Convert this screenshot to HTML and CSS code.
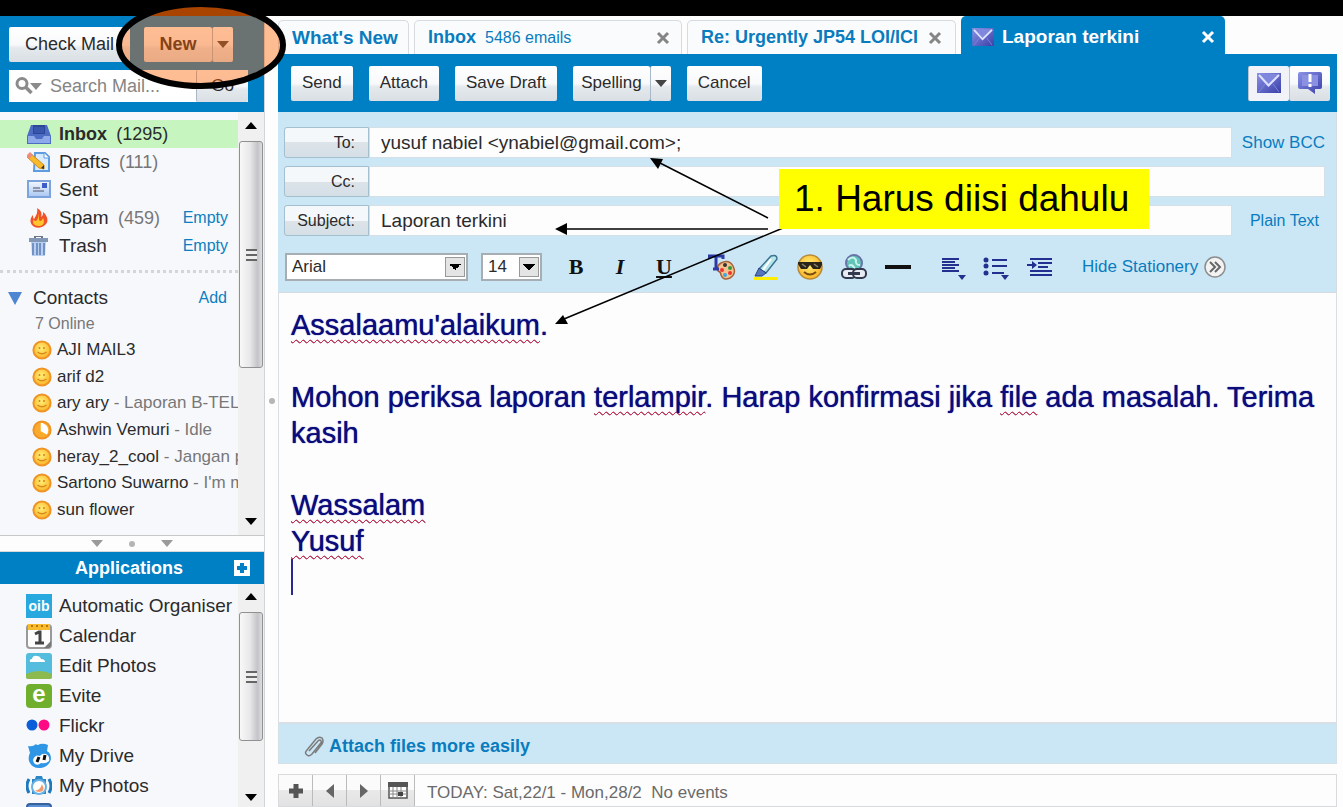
FILE: index.html
```
<!DOCTYPE html>
<html lang="id">
<head>
    <meta charset="UTF-8">
    <meta name="viewport" content="width=device-width, initial-scale=1.0">
    <title>Laporan terkini</title>
    <link rel="stylesheet" href="styles.css">
</head>
<body>
    <!-- shared symbols -->
    <svg class="defs" width="0" height="0" aria-hidden="true">
        <defs>
            <linearGradient id="violet" x1="0" y1="0" x2="1" y2="1">
                <stop offset="0" stop-color="#8b93e6"/>
                <stop offset="1" stop-color="#3a3fa8"/>
            </linearGradient>
            <linearGradient id="steel" x1="0" y1="0" x2="0" y2="1">
                <stop offset="0" stop-color="#f4f8ff"/>
                <stop offset="1" stop-color="#a9c6f2"/>
            </linearGradient>
            <radialGradient id="gold" cx=".45" cy=".4" r=".6">
                <stop offset="0" stop-color="#fff07a"/>
                <stop offset="1" stop-color="#fbb324"/>
            </radialGradient>
            <symbol id="smiley" viewBox="0 0 20 20">
                <circle cx="10" cy="10" r="8.6" fill="url(#gold)" stroke="#ef9424" stroke-width="2"/>
                <path d="M7.5 7v2M12 7v2" stroke="#d98a1c" stroke-width="1.6"/>
                <path d="M5.5 12q4.5 3.5 9 0" fill="none" stroke="#d98a1c" stroke-width="1.4"/>
            </symbol>
            <symbol id="idle" viewBox="0 0 20 20">
                <circle cx="10" cy="10" r="8.6" fill="#fbab2c" stroke="#ef9424" stroke-width="2"/>
                <path d="M10 3.5v7l5.5 2.500a6.500 6.500 0 0 0-5.500-9.500z" fill="#fff"/>
                <path d="M10 3v7.500l5.500 3" fill="none" stroke="#fff" stroke-width="2.500"/>
            </symbol>
            <symbol id="mail" viewBox="0 0 24 20">
                <rect width="24" height="20" fill="url(#violet)"/>
                <path d="M1 1h22L12 13z" fill="#7f88dd"/>
                <path d="M2 2l9.500 10.500L22 2" fill="none" stroke="#dfe3ff" stroke-width="2"/>
                <path d="M2 19l6-8M22 19l-6-8" fill="none" stroke="#7d84d8" stroke-width="1"/>
            </symbol>
            <symbol id="cross" viewBox="0 0 14 14">
                <path d="M2 2l10 10M12 2L2 12" fill="none" stroke="currentColor" stroke-width="3"/>
            </symbol>
            <symbol id="down" viewBox="0 0 12 7">
                <path d="M0 0h12L6 7z" fill="currentColor"/>
            </symbol>
        </defs>
    </svg>

    <div class="top-strip"></div>

    <div class="shell">
        <aside class="sidebar">
            <div class="side-head">
                <div class="head-row">
                    <button class="btn check">Check Mail</button>
                    <div class="split">
                        <button class="btn new">New</button>
                        <button class="btn arrow" aria-label="New options"><svg width="12" height="7"><use href="#down"/></svg></button>
                    </div>
                </div>
                <form class="search">
                    <label for="search" aria-label="Search">
                        <svg width="28" height="20" viewBox="0 0 28 20">
                            <circle cx="8" cy="7.500" r="5" fill="none" stroke="#8b8b8b" stroke-width="3"/>
                            <path d="M11.500 11l6 6" stroke="#8b8b8b" stroke-width="3.500"/>
                            <path d="M16 7h12l-6 7z" fill="#8b8b8b"/>
                        </svg>
                    </label>
                    <input id="search" type="text" placeholder="Search Mail...">
                    <button class="btn go" type="button">Go</button>
                </form>
            </div>

            <div class="side-panel folders-panel">
                <div class="side-content">
                    <ul class="folders">
                        <li class="current">
                            <svg width="24" height="20" viewBox="0 0 24 20">
                                <path d="M4 1h16l4 11v8H0v-8z" fill="#4d6cc4"/>
                                <path d="M6 1h12v9H6z" fill="#2c4796"/>
                                <path d="M1 12h6l2 3h6l2-3h6v7H1z" fill="#8ea9ea"/>
                                <path d="M7 3h10v6H7z" fill="#3856ab"/>
                            </svg>
                            <a href="#"><b>Inbox</b> <span>(1295)</span></a>
                        </li>
                        <li>
                            <svg width="24" height="20" viewBox="0 0 24 20">
                                <path d="M8 1h10l4 4v14H7z" fill="#d9ebff" stroke="#5f9be0" stroke-width="2"/>
                                <path d="M17 1v5h5" fill="#fff" stroke="#5f9be0"/>
                                <path d="M3 1l14 12v4l-5-1L0 5z" fill="#f8b92d" stroke="#d08b18"/>
                                <path d="M3 0l3 3-4 4-3-3z" fill="#ee8d7d"/>
                                <path d="M14 16l3 1v-4z" fill="#333"/>
                            </svg>
                            <a href="#">Drafts <span>(111)</span></a>
                        </li>
                        <li>
                            <svg width="24" height="20" viewBox="0 0 24 20">
                                <rect x="1" y="1" width="22" height="16" fill="url(#steel)" stroke="#7da3dd" stroke-width="2"/>
                                <rect x="15" y="3" width="5" height="5" fill="#3c5ec8"/>
                                <path d="M6 8h7M6 11h11" stroke="#7a7f96" stroke-width="1.500"/>
                            </svg>
                            <a href="#">Sent</a>
                        </li>
                        <li>
                            <svg width="24" height="20" viewBox="0 0 24 20">
                                <path d="M10 0c5 3 5 6 4 9 2-1 2-3 2-5 5 4 6 10 2 13-4 4-11 3-13 0-3-4-1-8 1-10 0 2 0 3 1 4C9 8 11 5 10 0z" fill="#f0532a"/>
                                <path d="M11 6c2 3 0 6 2 7 2 0 2-2 3-3 2 4 1 8-4 8-6 0-7-4-5-7 0 2 1 2 2 2 2-2 3-4 2-7z" fill="#ffc52e"/>
                            </svg>
                            <a href="#">Spam <span>(459)</span></a>
                            <a class="action" href="#">Empty</a>
                        </li>
                        <li>
                            <svg width="24" height="20" viewBox="0 0 24 20">
                                <path d="M8 2V0h7v2" fill="none" stroke="#6b7687" stroke-width="2"/>
                                <path d="M2 2h19v4H2z" fill="#8296b6"/>
                                <path d="M4 6h15l-1 14H5z" fill="#b9cff0"/>
                                <path d="M6 7v12M10 7v12M13 7v12M17 7v12" stroke="#5b7fb6" stroke-width="1.500"/>
                            </svg>
                            <a href="#">Trash</a>
                            <a class="action" href="#">Empty</a>
                        </li>
                    </ul>

                    <div class="contacts-head">
                        <svg width="14" height="13" viewBox="0 0 14 13"><path d="M0 0h14L7 13z" fill="#4f86d2"/></svg>
                        <h2>Contacts</h2>
                        <a class="action" href="#">Add</a>
                    </div>
                    <p class="online">7 Online</p>
                    <ul class="buddies">
                        <li><svg width="20" height="20"><use href="#smiley"/></svg>AJI MAIL3</li>
                        <li><svg width="20" height="20"><use href="#smiley"/></svg>arif d2</li>
                        <li><svg width="20" height="20"><use href="#smiley"/></svg>ary ary <span>- Laporan B-TEL</span></li>
                        <li><svg width="20" height="20"><use href="#idle"/></svg>Ashwin Vemuri <span>- Idle</span></li>
                        <li><svg width="20" height="20"><use href="#smiley"/></svg>heray_2_cool <span>- Jangan p</span></li>
                        <li><svg width="20" height="20"><use href="#smiley"/></svg>Sartono Suwarno <span>- I'm m</span></li>
                        <li><svg width="20" height="20"><use href="#smiley"/></svg>sun flower</li>
                    </ul>
                </div>
                <div class="scrollbar">
                    <svg class="up" width="12" height="7"><use href="#down"/></svg>
                    <div class="track"><div class="thumb tall"></div></div>
                    <svg width="12" height="7"><use href="#down"/></svg>
                </div>
            </div>

            <div class="splitter">
                <svg width="12" height="7"><use href="#down"/></svg>
                <i></i>
                <svg width="12" height="7"><use href="#down"/></svg>
            </div>

            <div class="apps-head">
                <h2>Applications</h2>
                <button aria-label="Add application">
                    <svg width="16" height="16" viewBox="0 0 16 16">
                        <rect width="16" height="16" fill="#fff"/>
                        <path d="M8 3v10M3 8h10" stroke="#0080c4" stroke-width="4"/>
                    </svg>
                </button>
            </div>

            <div class="side-panel apps-panel">
                <ul class="apps side-content">
                    <li><b class="oib">oib</b><a href="#">Automatic Organiser</a></li>
                    <li>
                        <svg width="26" height="26" viewBox="0 0 26 26">
                            <rect x="1" y="2" width="24" height="23" rx="3" fill="#fdfdfd" stroke="#9a9a9a" stroke-width="2"/>
                            <path d="M2 1h22v6H2z" fill="#f9bb2f"/>
                            <path d="M5 3h2M10 3h2M15 3h2M20 3h2" stroke="#b9770a" stroke-width="2"/>
                            <path d="M9 11l4-2h1v11M9 20h9" fill="none" stroke="#444" stroke-width="3"/>
                            <path d="M25 18l-7 7h5l2-2z" fill="#777"/>
                        </svg>
                        <a href="#">Calendar</a>
                    </li>
                    <li>
                        <svg width="26" height="26" viewBox="0 0 26 26">
                            <rect width="26" height="26" rx="3" fill="#54bcdc"/>
                            <path d="M0 21q13-6 26 0v3q0 2-2 2H2q-2 0-2-2z" fill="#8cba4e"/>
                            <path d="M4 9q-1-3 2-3 1-4 5-3 3 0 4 3 4 0 4 3z" fill="#fff"/>
                        </svg>
                        <a href="#">Edit Photos</a>
                    </li>
                    <li><b class="evite">e</b><a href="#">Evite</a></li>
                    <li>
                        <svg width="26" height="26" viewBox="0 0 26 26">
                            <circle cx="6" cy="12" r="5.500" fill="#0a5fd8"/>
                            <circle cx="18" cy="12" r="5.500" fill="#ff0a84"/>
                        </svg>
                        <a href="#">Flickr</a>
                    </li>
                    <li>
                        <svg width="26" height="26" viewBox="0 0 26 26">
                            <path d="M2 3q5 1 8-2 1 2 4 0 4-1 8 1l-1 6q4 2 4 8-2 8-10 9-9 1-12-7-1-5 1-8z" fill="#2f96e6"/>
                            <path d="M7 17q2-6 7-4 2-3 6-2 4 2 3 7-3 3-8 2-3 3-6 1-2-2-2-4z" fill="#fff"/>
                            <path d="M13 14l-2 5M19 12l-1 5" stroke="#111" stroke-width="3"/>
                        </svg>
                        <a href="#">My Drive</a>
                    </li>
                    <li>
                        <svg width="26" height="26" viewBox="0 0 26 26">
                            <path d="M3 6q-4 7 0 14M23 6q4 7 0 14" fill="none" stroke="#1d79bd" stroke-width="3"/>
                            <path d="M6 6h3l1-3h6l1 3h3v15H6z" fill="#2b86c8"/>
                            <circle cx="13" cy="14" r="7" fill="#fff" stroke="#69b1e2" stroke-width="2"/>
                            <path d="M9 17q5 1 7-6 4 8-3 8-3 0-4-2z" fill="#f39a6d"/>
                        </svg>
                        <a href="#">My Photos</a>
                    </li>
                    <li>
                        <svg width="26" height="26" viewBox="0 0 26 26"><rect x="1" y="1" width="24" height="24" rx="3" fill="#5a8fd2" stroke="#35619f" stroke-width="2"/></svg>
                    </li>
                </ul>
                <div class="scrollbar">
                    <svg class="up" width="12" height="7"><use href="#down"/></svg>
                    <div class="track"><div class="thumb short"></div></div>
                    <svg width="12" height="7"><use href="#down"/></svg>
                </div>
            </div>
        </aside>

        <div class="gutter"><i></i></div>

        <main class="main">
            <nav class="tabs">
                <a class="tab whats" href="#">What's New</a>
                <div class="tab inbox">
                    <a href="#">Inbox <span>5486 emails</span></a>
                    <button aria-label="Close Inbox"><svg width="14" height="14"><use href="#cross"/></svg></button>
                </div>
                <div class="tab re">
                    <a href="#">Re: Urgently JP54 LOI/ICI</a>
                    <button aria-label="Close message"><svg width="14" height="14"><use href="#cross"/></svg></button>
                </div>
                <div class="tab active">
                    <svg width="24" height="18"><use href="#mail"/></svg>
                    <a href="#">Laporan terkini</a>
                    <button aria-label="Close Laporan terkini"><svg width="14" height="14"><use href="#cross"/></svg></button>
                </div>
            </nav>

            <div class="toolbar">
                <button class="btn">Send</button>
                <button class="btn">Attach</button>
                <button class="btn">Save Draft</button>
                <div class="split">
                    <button class="btn">Spelling</button>
                    <button class="btn arrow" aria-label="Spelling options"><svg width="12" height="7"><use href="#down"/></svg></button>
                </div>
                <button class="btn">Cancel</button>
                <div class="split modes">
                    <button class="btn icon on" aria-label="Mail"><svg width="24" height="20"><use href="#mail"/></svg></button>
                    <button class="btn icon" aria-label="Instant message">
                        <svg width="26" height="24" viewBox="0 0 26 24">
                            <path d="M3 1h20q2 0 2 2v13q0 2-2 2h-5v5l-7-5H3q-2 0-2-2V3q0-2 2-2z" fill="url(#violet)"/>
                            <path d="M5 4h16v11H5z" fill="#8a91e2"/>
                            <path d="M13 3v8M13 13v3" stroke="#fff" stroke-width="3"/>
                        </svg>
                    </button>
                </div>
            </div>

            <div class="compose-head">
                <div class="field">
                    <label for="to">To:</label>
                    <input id="to" type="text" value="yusuf nabiel &lt;ynabiel@gmail.com&gt;;">
                    <a href="#">Show BCC</a>
                </div>
                <div class="field">
                    <label for="cc">Cc:</label>
                    <input id="cc" type="text">
                </div>
                <div class="field">
                    <label for="subject">Subject:</label>
                    <input id="subject" type="text" value="Laporan terkini">
                    <a href="#" class="small">Plain Text</a>
                </div>

                <div class="format-bar">
                    <select class="font" aria-label="Font"><option>Arial</option></select>
                    <select class="size" aria-label="Font size"><option>14</option></select>
                    <div class="tools">
                        <button class="bold">B</button>
                        <button class="italic">I</button>
                        <button class="under">U</button>
                    </div>
                    <div class="tools pictures">
                        <button aria-label="Text colour">
                            <svg width="28" height="28" viewBox="0 0 28 28">
                                <path d="M13 10q8-4 12 3 4 8-3 12-7 3-9-3 0-3-3-4-2-5 3-8z" fill="#f5c18c" stroke="#a4613a" stroke-width="1.500"/>
                                <circle cx="17" cy="12" r="2" fill="#333"/><circle cx="22" cy="15" r="2" fill="#2d9a3d"/>
                                <circle cx="22" cy="20" r="2" fill="#e33"/><circle cx="17" cy="22" r="2" fill="#38a9e0"/><circle cx="14" cy="17" r="2" fill="#e33"/>
                                <path d="M1 6V3h14v3M8 3v13M5 16h6" fill="none" stroke="#2c3aa6" stroke-width="3"/>
                            </svg>
                        </button>
                        <button aria-label="Highlight">
                            <svg width="28" height="28" viewBox="0 0 28 28">
                                <path d="M2 24h24v3H2z" fill="#ffee00"/>
                                <path d="M19 3q6-2 6 3L14 20 7 16z" fill="#b4e6ea" stroke="#3c7392" stroke-width="1.500"/>
                                <path d="M7 15l7 5-4 3H3z" fill="#5575bd" stroke="#2d4377"/>
                                <path d="M19 6L11 17" stroke="#fff" stroke-width="2"/>
                            </svg>
                        </button>
                        <button aria-label="Emoticon">
                            <svg width="28" height="28" viewBox="0 0 28 28">
                                <circle cx="14" cy="14" r="12" fill="url(#gold)" stroke="#b98a38" stroke-width="1.500"/>
                                <path d="M2 9h24v3l-2 4h-7l-3-4-3 4H5l-3-5z" fill="#2b2418"/>
                                <path d="M6 11l4 3M18 11l4 3" stroke="#8a8474" stroke-width="1.500"/>
                                <path d="M8 19q6 5 12 0" fill="none" stroke="#7b4a12" stroke-width="2"/>
                            </svg>
                        </button>
                        <button aria-label="Insert link">
                            <svg width="28" height="28" viewBox="0 0 28 28">
                                <circle cx="14" cy="10" r="8" fill="#62c5b8" stroke="#6973a8" stroke-width="2"/>
                                <path d="M8 7q5-5 8 0-1 5 4 5M9 13q3-3 6 3" fill="none" stroke="#c9f3ec" stroke-width="2"/>
                                <rect x="2" y="16" width="14" height="9" rx="4" fill="#e8ebf3" stroke="#33384d" stroke-width="2"/>
                                <rect x="13" y="16" width="13" height="9" rx="4" fill="#e8ebf3" stroke="#33384d" stroke-width="2"/>
                                <path d="M8 20.500h12" stroke="#33384d" stroke-width="3"/>
                            </svg>
                        </button>
                        <button aria-label="Horizontal line">
                            <svg width="28" height="28" viewBox="0 0 28 28"><path d="M1 14h26" stroke="#111" stroke-width="4"/></svg>
                        </button>
                    </div>
                    <div class="tools para">
                        <button aria-label="Align">
                            <svg width="28" height="28" viewBox="0 0 28 28">
                                <path d="M2 6h17M2 9h13M2 12h17M2 15h13M2 18h17" stroke="#23308f" stroke-width="2"/>
                                <path d="M18 22h8l-4 5z" fill="#23308f"/>
                            </svg>
                        </button>
                        <button aria-label="List">
                            <svg width="28" height="28" viewBox="0 0 28 28">
                                <path d="M9 7h15M9 13h15M9 20h12" stroke="#23308f" stroke-width="2"/>
                                <circle cx="3" cy="7" r="2.500" fill="#23308f"/><circle cx="3" cy="13" r="2.500" fill="#23308f"/><circle cx="3" cy="20" r="2.500" fill="#23308f"/>
                                <path d="M18 22h8l-4 5z" fill="#23308f"/>
                            </svg>
                        </button>
                        <button aria-label="Indent">
                            <svg width="28" height="28" viewBox="0 0 28 28">
                                <path d="M4 6h22M12 10h14M12 14h10M4 18h22M4 22h22" stroke="#23308f" stroke-width="2"/>
                                <path d="M1 12h6" stroke="#23308f" stroke-width="2"/>
                                <path d="M6 8l5 4-5 4z" fill="#23308f"/>
                            </svg>
                        </button>
                    </div>
                    <a class="stationery" href="#">Hide Stationery
                        <svg width="22" height="22" viewBox="0 0 22 22">
                            <circle cx="11" cy="11" r="10" fill="#f3f3f3" stroke="#8d8d8d" stroke-width="1.500"/>
                            <path d="M6 6l5 5-5 5M11 6l5 5-5 5" fill="none" stroke="#666" stroke-width="2"/>
                        </svg>
                    </a>
                </div>
            </div>

            <div class="editor" contenteditable="true" spellcheck="false">
                <p><u>Assalaamu'alaikum</u>.</p>
                <p><br></p>
                <p>Mohon periksa laporan <u>terlampir</u>. Harap konfirmasi jika <u>file</u> ada masalah. Terima kasih</p>
                <p><br></p>
                <p><u>Wassalam</u></p>
                <p><u>Yusuf</u></p>
                <p class="caret"><br></p>
            </div>

            <div class="attach-bar">
                <svg width="20" height="22" viewBox="0 0 20 22">
                    <path d="M5 15L14 5q2-2 3 0 1 1-1 3L8 18q-3 3-5 1-3-2 0-5L12 3q3-3 6-1 2 3 0 6l-7 9" fill="none" stroke="#7b7b7b" stroke-width="1.500"/>
                </svg>
                <a href="#">Attach files more easily</a>
            </div>

            <footer class="agenda">
                <button aria-label="Add event"><svg width="14" height="14" viewBox="0 0 14 14"><path d="M7 0v14M0 7h14" stroke="#555" stroke-width="5"/></svg></button>
                <button aria-label="Previous"><svg width="8" height="14" viewBox="0 0 8 14"><path d="M8 0v14L0 7z" fill="#666"/></svg></button>
                <button aria-label="Next"><svg width="8" height="14" viewBox="0 0 8 14"><path d="M0 0v14l8-7z" fill="#666"/></svg></button>
                <button aria-label="Calendar">
                    <svg width="20" height="17" viewBox="0 0 20 17">
                        <rect x="1" y="1" width="18" height="15" fill="#fff" stroke="#555" stroke-width="1.500"/>
                        <path d="M0 0h20v5H0z" fill="#555"/>
                        <path d="M1 9h18M1 12h18M5 5v11M9 5v11M13 5v11" stroke="#888"/>
                        <path d="M10 10h5v4h-5z" fill="#444"/>
                    </svg>
                </button>
                <p>TODAY: Sat,22/1 - Mon,28/2&nbsp; No events</p>
            </footer>
        </main>
    </div>

    <!-- tutorial notes drawn over the mail window -->
    <svg class="ring" width="172" height="88" viewBox="0 0 172 88">
        <clipPath id="above"><rect width="172" height="15"/></clipPath>
        <ellipse cx="86" cy="44" rx="82" ry="41" fill="#ff6200" fill-opacity=".42"/>
        <ellipse cx="86" cy="44" rx="82" ry="41" fill="#ff6a00" fill-opacity=".42" clip-path="url(#above)"/>
        <ellipse cx="86" cy="44" rx="82" ry="41" fill="none" stroke="#000" stroke-width="6"/>
    </svg>
    <svg class="arrows" width="240" height="180" viewBox="0 0 240 180">
        <path d="M218 67L110 12M218 78H14M233 77L14 168" fill="none" stroke="#000" stroke-width="1.500"/>
        <path d="M100 7l13 1-5 10zM5 78l12-6v12zM5 173l8-9 5 9z"/>
    </svg>
    <div class="note">1. Harus diisi dahulu</div>
</body>
</html>
```
FILE: styles.css
```
* {
    margin: 0;
    padding: 0;
    box-sizing: border-box;
}

body {
    position: relative;
    height: 100vh;
    display: flex;
    flex-direction: column;
    overflow: hidden;
    background: #fdfdfe;
    color: #2b2b2b;
    font-family: "Liberation Sans", Arial, sans-serif;
    font-size: 17px;
}

button,
input,
select {
    font: inherit;
    color: inherit;
    border: none;
    border-radius: 0;
    background: none;
}

button {
    cursor: pointer;
}

a {
    color: inherit;
    text-decoration: none;
}

ul {
    list-style: none;
}

.defs {
    position: absolute;
}

.top-strip {
    flex: none;
    height: 16px;
    background: #000;
}

.shell {
    flex: 1;
    min-height: 0;
    display: flex;
}

/* buttons */
.btn {
    display: flex;
    align-items: center;
    justify-content: center;
    height: 35px;
    padding: 0 11px;
    border-radius: 2px;
    background: linear-gradient(#fff, #f8f9fb 50%, #e4e9ed 60%, #d9dfe4);
    white-space: nowrap;
}

.split {
    display: flex;
}

.split .btn {
    padding: 0 8px;
}

.split .arrow {
    padding: 0 4px;
    border-left: 1px solid #a9b8c4;
    color: #444;
}

/* sidebar */
.sidebar {
    flex: none;
    width: 265px;
    display: flex;
    flex-direction: column;
    border-right: 1px solid #cfd4d8;
    background: #f7f8fc;
}

.side-head {
    flex: none;
    height: 96px;
    padding: 11px 16px 0 9px;
    background: #0080c4;
}

.head-row {
    display: flex;
    gap: 14px;
    margin-bottom: 8px;
}

.check {
    width: 121px;
    font-size: 18px;
}

.new {
    width: 68px;
    font-size: 18px;
    font-weight: bold;
}

.search {
    display: flex;
    align-items: center;
    height: 32px;
    background: #fff;
}

.search label {
    display: flex;
    padding-left: 5px;
}

.search input {
    flex: 1;
    min-width: 0;
    padding-left: 8px;
    font-size: 18px;
}

.search input::placeholder {
    color: #858585;
    opacity: 1;
}

.go {
    width: 52px;
    height: 32px;
    border-left: 1px solid #a9b8c4;
}

.side-panel {
    display: flex;
    overflow: hidden;
}

.side-content {
    flex: 1;
    min-width: 0;
}

.folders-panel {
    flex: none;
    height: 424px;
    border-bottom: 1px solid #c8c8c8;
}

.folders {
    padding: 8px 0 10px;
    border-bottom: 3px dotted #d4d5d8;
    font-size: 19px;
}

.folders li {
    display: flex;
    align-items: center;
    gap: 8px;
    height: 28px;
    padding: 0 10px 0 27px;
}

.folders .current {
    background: #c6f5c0;
}

.folders b {
    font-size: 18px;
}

.folders span {
    margin-left: 4px;
    font-size: 18px;
    color: #777;
}

.folders .current span {
    color: #2b2b2b;
}

.action {
    margin-left: auto;
    font-size: 16px;
    color: #0a80c0;
}

.contacts-head {
    display: flex;
    align-items: center;
    height: 26px;
    margin-top: 12px;
    padding: 0 11px 0 8px;
}

.contacts-head h2 {
    margin-left: 11px;
    font-size: 19px;
    font-weight: normal;
}

.online {
    padding-left: 35px;
    font-size: 16px;
    line-height: 26px;
    color: #777;
}

.buddies {
    display: grid;
    grid-auto-rows: 1fr;
    height: 186px;
}

.buddies li {
    display: flex;
    align-items: center;
    overflow: hidden;
    padding-left: 32px;
    white-space: pre;
}

.buddies svg {
    flex: none;
    margin-right: 5px;
}

.buddies span {
    color: #777;
}

.scrollbar {
    flex: none;
    width: 26px;
    display: flex;
    flex-direction: column;
    align-items: center;
    padding: 10px 1px;
    background: #f0f0f1;
    color: #000;
}

.scrollbar .up {
    transform: scaleY(-1);
}

.track {
    flex: 1;
    width: 100%;
    padding-top: 12px;
}

.thumb {
    display: flex;
    align-items: center;
    justify-content: center;
    border: 1px solid #909090;
    border-radius: 3px;
    background: linear-gradient(90deg, #f8f8f8, #e8e8ea 45%, #c4c4c9 80%, #dedee0);
}

.thumb::after {
    content: "";
    width: 11px;
    height: 12px;
    background: repeating-linear-gradient(#666 0 2px, #eee 2px 5px);
}

.tall {
    height: 227px;
}

.short {
    height: 129px;
}

.splitter {
    flex: none;
    display: flex;
    align-items: center;
    justify-content: center;
    gap: 26px;
    height: 16px;
    border-bottom: 1px solid #d8d8d8;
    background: #fdfdfd;
    color: #9a9a9a;
}

.splitter i,
.gutter i {
    width: 6px;
    height: 6px;
    border-radius: 50%;
    background: #b5b5b5;
}

.apps-head {
    flex: none;
    display: flex;
    align-items: center;
    height: 32px;
    padding: 0 14px 0 24px;
    background: #0080c4;
    color: #fff;
}

.apps-head h2 {
    flex: 1;
    text-align: center;
    font-size: 18px;
}

.apps-head button {
    display: flex;
}

.apps-panel {
    flex: 1;
    min-height: 0;
}

.apps {
    padding-top: 7px;
    font-size: 19px;
}

.apps-panel .scrollbar {
    padding: 9px 1px 6px;
}

.apps li {
    display: flex;
    align-items: center;
    gap: 7px;
    height: 30px;
    padding-left: 26px;
    white-space: nowrap;
}

.oib,
.evite {
    flex: none;
    width: 26px;
    height: 24px;
    color: #fff;
    font-size: 14px;
    line-height: 24px;
    text-align: center;
    background: #27a9df;
}

.evite {
    border-radius: 4px;
    font-size: 24px;
    line-height: 20px;
    background: #6faf2d;
}

.gutter {
    flex: none;
    display: flex;
    align-items: center;
    justify-content: center;
    width: 13px;
    padding-bottom: 22px;
}

/* main column */
.main {
    flex: 1;
    min-width: 0;
    display: flex;
    flex-direction: column;
    margin-right: 6px;
}

.tabs {
    flex: none;
    display: flex;
    align-items: flex-end;
    gap: 5px;
    height: 38px;
    font-size: 19px;
    font-weight: bold;
    color: #0a7cbe;
}

.tab {
    display: flex;
    align-items: center;
    height: 34px;
    padding: 0 13px;
    border: 1px solid #d5dbe0;
    border-bottom: none;
    border-radius: 5px 5px 0 0;
    background: #fafbfd;
    white-space: nowrap;
}

.tab button {
    display: flex;
    margin-left: auto;
    color: #858585;
}

.tab span {
    margin-left: 4px;
    font-size: 16px;
    font-weight: normal;
}

.whats {
    width: 131px;
}

.inbox {
    width: 268px;
    padding-right: 11px;
    font-size: 18px;
}

.re {
    width: 269px;
    font-size: 18px;
}

.active {
    width: 264px;
    height: 38px;
    padding: 4px 10px 0;
    gap: 7px;
    border: none;
    background: #0080c4;
    color: #fff;
}

.active button {
    color: #fff;
}

.toolbar {
    flex: none;
    display: flex;
    align-items: center;
    gap: 16px;
    height: 58px;
    padding: 0 7px 0 13px;
    background: #0080c4;
}

.modes {
    margin-left: auto;
}

.modes .icon {
    width: 41px;
    padding: 0;
    border-left: 1px solid #b9c4cd;
}

.on {
    background: #f1f3f8;
}

.compose-head {
    flex: none;
    padding: 15px 11px 0 6px;
    border-right: 1px solid #d5dbe0;
    border-bottom: 1px solid #d5dbe0;
    background: #cbe7f6;
}

.field {
    display: flex;
    align-items: center;
    height: 31px;
    margin-bottom: 8px;
}

.field label {
    flex: none;
    width: 85px;
    height: 31px;
    padding-right: 13px;
    border: 1px solid #a3bfd0;
    border-radius: 3px 0 0 3px;
    background: linear-gradient(#f5f8fa 50%, #dce4e9 50%, #d5dfe6);
    font-size: 16px;
    line-height: 30px;
    text-align: right;
}

.field input {
    flex: 1;
    min-width: 0;
    height: 31px;
    padding: 0 11px;
    border: 1px solid #d5dfe6;
    background: #fdfdfe;
    font-size: 19px;
}

.field a {
    width: 93px;
    text-align: right;
    color: #0a7cbe;
}

.field .small {
    padding-right: 6px;
    font-size: 16px;
}

.format-bar {
    display: flex;
    align-items: center;
    height: 48px;
    padding: 0 0 3px 1px;
}

.format-bar select {
    height: 28px;
    padding-left: 5px;
    border: 2px solid #a7aeb3;
    appearance: none;
    background:
        linear-gradient(45deg, transparent 50%, #000 50%) right 11px center / 6px 6px no-repeat,
        linear-gradient(-45deg, transparent 50%, #000 50%) right 5px center / 6px 6px no-repeat,
        linear-gradient(#e4e4e4, #e4e4e4) right 2px center / 18px 18px no-repeat,
        linear-gradient(#999, #999) right 1px center / 20px 20px no-repeat,
        #fff;
}

.format-bar .font {
    width: 183px;
    margin-right: 13px;
}

.format-bar .size {
    width: 61px;
}

.tools {
    display: flex;
    gap: 16px;
    margin-left: 20px;
}

.tools button {
    display: flex;
    align-items: center;
    justify-content: center;
    width: 28px;
    height: 28px;
    color: #111;
    font: bold 22px "Liberation Serif", "Times New Roman", serif;
}

.tools .bold {
    font-weight: 900;
}

.tools .italic {
    font-style: italic;
}

.tools .under {
    text-decoration: underline;
}

.pictures {
    margin-left: 30px;
}

.para {
    gap: 15px;
    margin-left: 28px;
}

.stationery {
    display: flex;
    align-items: center;
    gap: 6px;
    margin-left: 28px;
    color: #0a7cbe;
}

.editor {
    flex: 1;
    min-height: 0;
    padding: 14px 4px 0 12px;
    border: 1px solid #dcdfe2;
    border-top: none;
    outline: none;
    background: #fdfdfe;
    color: #0b0b7c;
    font-size: 29px;
    line-height: 36px;
    text-shadow: 0 0 1px #0b0b7c;
}

.editor u {
    text-decoration: underline wavy #f0303c 1px;
    text-decoration-skip-ink: none;
    text-underline-offset: 4px;
}

.caret {
    border-left: 2px solid #2a2a8c;
}

.attach-bar {
    flex: none;
    display: flex;
    align-items: center;
    gap: 5px;
    height: 41px;
    margin-bottom: 10px;
    padding: 6px 0 0 25px;
    border: 1px solid #d5dfe6;
    background: #cbe7f6;
    color: #0a7cbe;
    font-size: 18px;
    font-weight: bold;
}

.agenda {
    flex: none;
    display: flex;
    height: 33px;
    border: 1px solid #d8dadc;
    color: #6a6a6a;
}

.agenda button {
    display: flex;
    align-items: center;
    justify-content: center;
    width: 34px;
    border-right: 1px solid #b9bbbd;
    background: linear-gradient(#fbfbfb 50%, #e9e9ea 50%, #e2e2e3);
}

.agenda p {
    padding-left: 12px;
    line-height: 35px;
}

/* notes */
.ring {
    position: absolute;
    left: 115px;
    top: 1px;
}

.arrows {
    position: absolute;
    left: 550px;
    top: 151px;
}

.note {
    position: absolute;
    left: 779px;
    top: 169px;
    padding: 0 20px 0 15px;
    background: #ff0;
    color: #000;
    font-size: 37px;
    line-height: 60px;
}
```
